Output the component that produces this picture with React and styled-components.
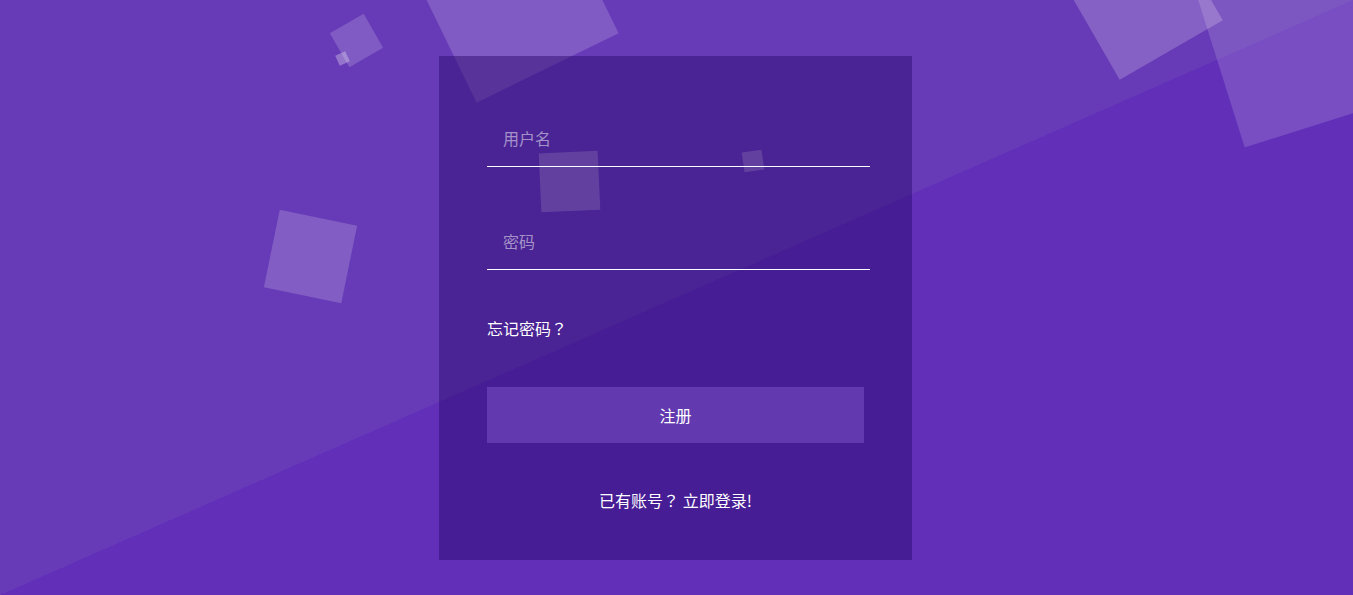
import React from "react";
import styled, { createGlobalStyle } from "styled-components";

const GlobalStyle = createGlobalStyle`
  html, body {
    margin: 0;
    padding: 0;
    height: 100%;
    overflow: hidden;
  }
  body {
    font-family: "Noto Sans CJK SC", "Noto Sans", sans-serif;
    text-spacing-trim: space-all;
  }
  * { box-sizing: border-box; }
`;

const Page = styled.div`
  position: relative;
  min-height: 100vh;
  overflow: hidden;
  display: flex;
  justify-content: center;
  align-items: flex-start;
  padding-top: 56px;
  background: linear-gradient(to bottom right, #673ab7 50%, #612fb8 50%);
`;

const Bubbles = styled.ul`
  position: absolute;
  inset: 0;
  margin: 0;
  padding: 0;
  list-style: none;
  pointer-events: none;
`;

const Bubble = styled.li`
  position: absolute;
  left: ${(p) => p.$x - p.$size / 2}px;
  top: ${(p) => p.$y - p.$size / 2}px;
  width: ${(p) => p.$size}px;
  height: ${(p) => p.$size}px;
  background: rgba(255, 255, 255, ${(p) => p.$alpha});
  transform: rotate(${(p) => p.$rotate}deg);
`;

const Card = styled.form`
  position: relative;
  z-index: 1;
  width: 473px;
  margin-right: 2px;
  padding: 56px 48px 48px 48px;
  background: rgba(45, 12, 113, 0.5);
  display: flex;
  flex-direction: column;
`;

const Field = styled.input`
  display: block;
  width: calc(100% + 6px);
  height: 55px;
  margin: 0;
  padding: 0 16px 2px;
  border: none;
  border-bottom: 1px solid #ffffff;
  background: transparent;
  color: #ffffff;
  font-family: inherit;
  font-size: 16px;
  outline: none;
  margin-bottom: ${(p) => p.$gap || 0}px;

  &::placeholder {
    color: rgba(255, 255, 255, 0.5);
  }
`;

const Forgot = styled.a`
  display: block;
  margin-top: 46px;
  height: 24px;
  line-height: 24px;
  font-size: 16px;
  color: #ffffff;
  text-decoration: none;
  cursor: pointer;
`;

/* full-width question mark, centred in its cell */
const Mark = styled.span`
  font-family: "Noto Sans CJK JP", "Noto Sans CJK SC", sans-serif;
`;

const Submit = styled.button`
  display: block;
  width: 100%;
  height: 56px;
  margin-top: 47px;
  border: none;
  background: #6239ae;
  color: #ffffff;
  font-family: inherit;
  font-size: 16px;
  cursor: pointer;
`;

const Footer = styled.p`
  margin: 45px 0 0;
  height: 24px;
  line-height: 24px;
  text-align: center;
  font-size: 16px;
  color: #ffffff;
  white-space: pre;
  cursor: pointer;
`;

const squares = [
  { x: 512.5, y: -3, size: 158, rotate: -26, alpha: 0.17 },
  { x: 1141, y: -2, size: 119, rotate: -30, alpha: 0.2 },
  { x: 1310, y: 22, size: 200, rotate: -17.5, alpha: 0.15 },
  { x: 356.5, y: 40, size: 39, rotate: -30, alpha: 0.17 },
  { x: 342, y: 58, size: 11, rotate: -25, alpha: 0.3 },
  { x: 310, y: 256.5, size: 79, rotate: 11.6, alpha: 0.18 },
  { x: 570, y: 181.4, size: 59.4, rotate: -2.6, alpha: 0.3 },
  { x: 753, y: 160.5, size: 20, rotate: -8, alpha: 0.3 },
];

export default function App() {
  return (
    <>
      <GlobalStyle />
      <Page>
        <Bubbles>
          {squares.map((s, i) => (
            <Bubble
              key={i}
              $x={s.x}
              $y={s.y}
              $size={s.size}
              $rotate={s.rotate}
              $alpha={s.alpha}
            />
          ))}
        </Bubbles>
        <Card onSubmit={(e) => e.preventDefault()}>
          <Field type="text" placeholder="用户名" $gap={48} />
          <Field type="password" placeholder="密码" />
          <Forgot>
            忘记密码<Mark>？</Mark>
          </Forgot>
          <Submit type="submit">注册</Submit>
          <Footer>
            已有账号<Mark>？</Mark>
            {" 立即登录!"}
          </Footer>
        </Card>
      </Page>
    </>
  );
}
